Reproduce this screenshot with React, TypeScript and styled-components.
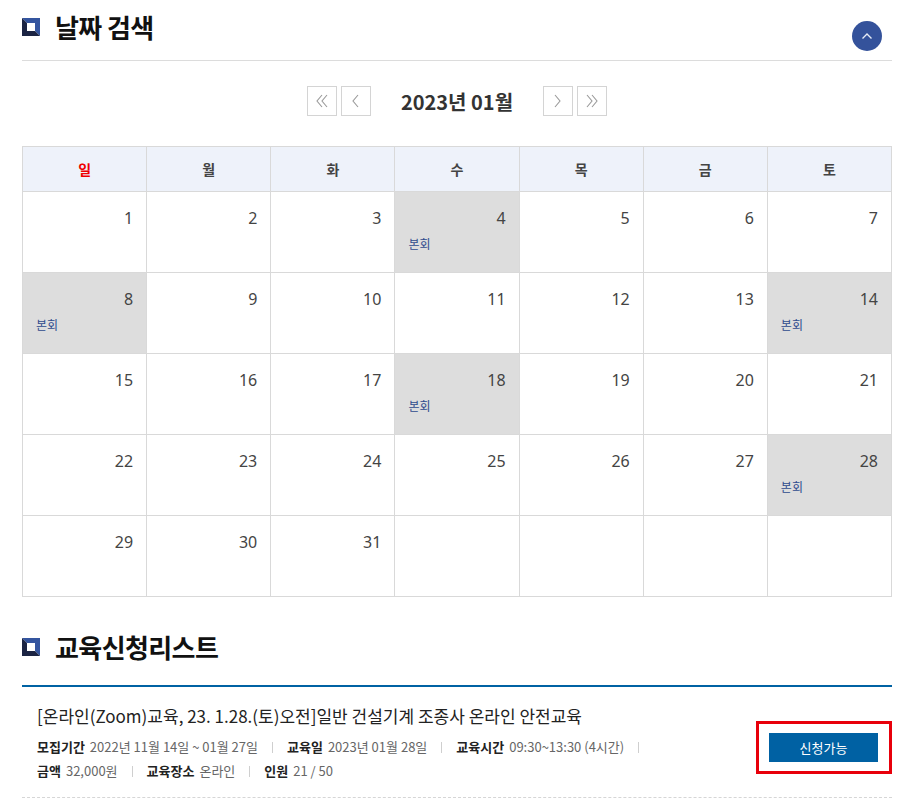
import React from 'react';
import styled, { createGlobalStyle } from 'styled-components';

const GlobalStyle = createGlobalStyle`
  body {
    margin: 0;
    background: #fff;
    font-family: 'Noto Sans CJK KR', 'Noto Sans', sans-serif;
    color: #222;
  }
`;

const WEEKDAYS = ['일', '월', '화', '수', '목', '금', '토'];
const EVENTS: Record<number, string> = { 4: '본회', 8: '본회', 14: '본회', 18: '본회', 28: '본회' };

const buildWeeks = () => {
  const days: (number | null)[] = [];
  for (let d = 1; d <= 31; d++) days.push(d);
  while (days.length % 7) days.push(null);
  const weeks: (number | null)[][] = [];
  for (let i = 0; i < days.length; i += 7) weeks.push(days.slice(i, i + 7));
  return weeks;
};

const Chevron: React.FC<{ dir: 'left' | 'right'; double?: boolean }> = ({ dir, double }) => {
  const pts = (x: number) => (dir === 'left' ? `${x + 5},2 ${x},8 ${x + 5},14` : `${x},2 ${x + 5},8 ${x},14`);
  return (
    <svg width="14" height="16" viewBox="0 0 14 16" fill="none" stroke="#9a9a9a" strokeWidth="1.1">
      {double ? (
        <>
          <polyline points={pts(2)} />
          <polyline points={pts(7)} />
        </>
      ) : (
        <polyline points={pts(4)} />
      )}
    </svg>
  );
};

const TitleIcon: React.FC = () => (
  <svg width="18" height="18" viewBox="0 0 18 18">
    <polygon points="0,0 18,0 18,18" fill="#34559f" />
    <polygon points="0,0 0,18 18,18" fill="#1b2443" />
    <rect x="5" y="5" width="8" height="8" fill="#fff" />
  </svg>
);

const App: React.FC = () => {
  const weeks = buildWeeks();
  return (
    <>
      <GlobalStyle />
      <Page>
        <HeadRow>
          <SectionTitle>
            <TitleIcon />
            날짜 검색
          </SectionTitle>
          <CircleButton>
            <svg width="12" height="8" viewBox="0 0 12 8" fill="none" stroke="#e6ebf5" strokeWidth="1.4">
              <polyline points="1.5,6.5 6,2 10.5,6.5" />
            </svg>
          </CircleButton>
        </HeadRow>

        <MonthNav>
          <NavButton><Chevron dir="left" double /></NavButton>
          <NavButton><Chevron dir="left" /></NavButton>
          <MonthTitle>2023년 01월</MonthTitle>
          <NavButton><Chevron dir="right" /></NavButton>
          <NavButton><Chevron dir="right" double /></NavButton>
        </MonthNav>

        <Calendar>
          <thead>
            <tr>
              {WEEKDAYS.map((w, i) => (
                <HeadCell key={w} $sunday={i === 0}>{w}</HeadCell>
              ))}
            </tr>
          </thead>
          <tbody>
            {weeks.map((week, wi) => (
              <tr key={wi}>
                {week.map((day, di) => (
                  <DayCell key={di} $marked={!!(day && EVENTS[day])}>
                    {day && <DayNum>{day}</DayNum>}
                    {day && EVENTS[day] && <EventLabel>{EVENTS[day]}</EventLabel>}
                  </DayCell>
                ))}
              </tr>
            ))}
          </tbody>
        </Calendar>

        <ListHead>
          <SectionTitle>
            <TitleIcon />
            교육신청리스트
          </SectionTitle>
        </ListHead>

        <List>
          <Item>
            <Info>
              <ItemTitle>[온라인(Zoom)교육, 23. 1.28.(토)오전]일반 건설기계 조종사 온라인 안전교육</ItemTitle>
              <Meta>
                <MetaItem><b>모집기간</b> 2022년 11월 14일 ~ 01월 27일</MetaItem>
                <MetaItem><b>교육일</b> 2023년 01월 28일</MetaItem>
                <MetaItem><b>교육시간</b> 09:30~13:30 (4시간)</MetaItem>
                <MetaItem><b>금액</b> 32,000원</MetaItem>
                <MetaItem><b>교육장소</b> 온라인</MetaItem>
                <MetaItem $last><b>인원</b> 21 / 50</MetaItem>
              </Meta>
            </Info>
            <Highlight>
              <ApplyButton>신청가능</ApplyButton>
            </Highlight>
          </Item>
        </List>
      </Page>
    </>
  );
};

const Page = styled.div`
  width: 870px;
  margin: 0 22px;
`;

const HeadRow = styled.div`
  display: flex;
  justify-content: space-between;
  align-items: flex-start;
  height: 48px;
  padding-top: 12px;
  border-bottom: 1px solid #dcdcdc;
`;

const SectionTitle = styled.h2`
  display: flex;
  align-items: center;
  gap: 15px;
  margin: 0;
  font-size: 26px;
  line-height: 30px;
  font-weight: 700;
  color: #111;
  letter-spacing: -0.6px;
`;

const CircleButton = styled.button`
  display: flex;
  align-items: center;
  justify-content: center;
  width: 30px;
  height: 30px;
  margin: 9px 10px 0 0;
  padding: 0;
  border: none;
  border-radius: 50%;
  background: #34529b;
`;

const MonthNav = styled.div`
  display: flex;
  justify-content: center;
  align-items: center;
  gap: 4px;
  margin-top: 25px;
`;

const NavButton = styled.button`
  display: flex;
  align-items: center;
  justify-content: center;
  width: 30px;
  height: 30px;
  padding: 0;
  border: 1px solid #d4d4d4;
  background: #fff;
`;

const MonthTitle = styled.div`
  width: 164px;
  text-align: center;
  font-size: 20px;
  font-weight: 700;
  color: #333;
`;

const Calendar = styled.table`
  width: 100%;
  margin-top: 30px;
  border-collapse: collapse;
  table-layout: fixed;
`;

const HeadCell = styled.th<{ $sunday?: boolean }>`
  height: 44px;
  padding: 0;
  border: 1px solid #d9d9d9;
  background: #eef2fa;
  font-size: 14px;
  font-weight: 700;
  color: ${p => (p.$sunday ? '#ee0000' : '#444')};
`;

const DayCell = styled.td<{ $marked?: boolean }>`
  height: 66px;
  padding: 14px 13px 0;
  vertical-align: top;
  border: 1px solid #d9d9d9;
  background: ${p => (p.$marked ? '#dddddd' : '#fff')};
`;

const DayNum = styled.div`
  text-align: right;
  font-family: 'Noto Sans', sans-serif;
  font-size: 16px;
  line-height: 24px;
  color: #444;
`;

const EventLabel = styled.div`
  margin-top: 6px;
  font-size: 12px;
  line-height: 16px;
  color: #2f4b8d;
`;

const ListHead = styled.div`
  margin-top: 35px;
  padding-bottom: 23px;
`;

const List = styled.ul`
  margin: 0;
  padding: 0;
  list-style: none;
  border-top: 2px solid #0062a3;
`;

const Item = styled.li`
  display: flex;
  align-items: center;
  padding: 17px 0 14px 15px;
  border-bottom: 1px dashed #d6d6d6;
`;

const Info = styled.div`
  flex: 1;
  max-width: 690px;
`;

const ItemTitle = styled.div`
  font-size: 17px;
  line-height: 24px;
  color: #222;
`;

const Meta = styled.div`
  display: flex;
  flex-wrap: wrap;
  margin-top: 7px;
`;

const MetaItem = styled.span<{ $last?: boolean }>`
  display: inline-flex;
  align-items: center;
  font-size: 13px;
  line-height: 24px;
  color: #666;

  b {
    margin-right: 5px;
    color: #222;
    font-weight: 700;
  }

  &::after {
    content: '';
    display: ${p => (p.$last ? 'none' : 'block')};
    width: 1px;
    height: 11px;
    margin: 0 14px;
    background: #cfcfcf;
  }
`;

const Highlight = styled.div`
  margin: 7px 0 0 auto;
  padding: 9px 11px 9px 10px;
  border: 3px solid #e8000b;
`;

const ApplyButton = styled.button`
  display: block;
  width: 109px;
  height: 29px;
  padding: 0;
  border: none;
  background: #0061a3;
  color: #fff;
  font-family: 'Noto Sans CJK KR', sans-serif;
  font-size: 13px;
`;

export default App;
